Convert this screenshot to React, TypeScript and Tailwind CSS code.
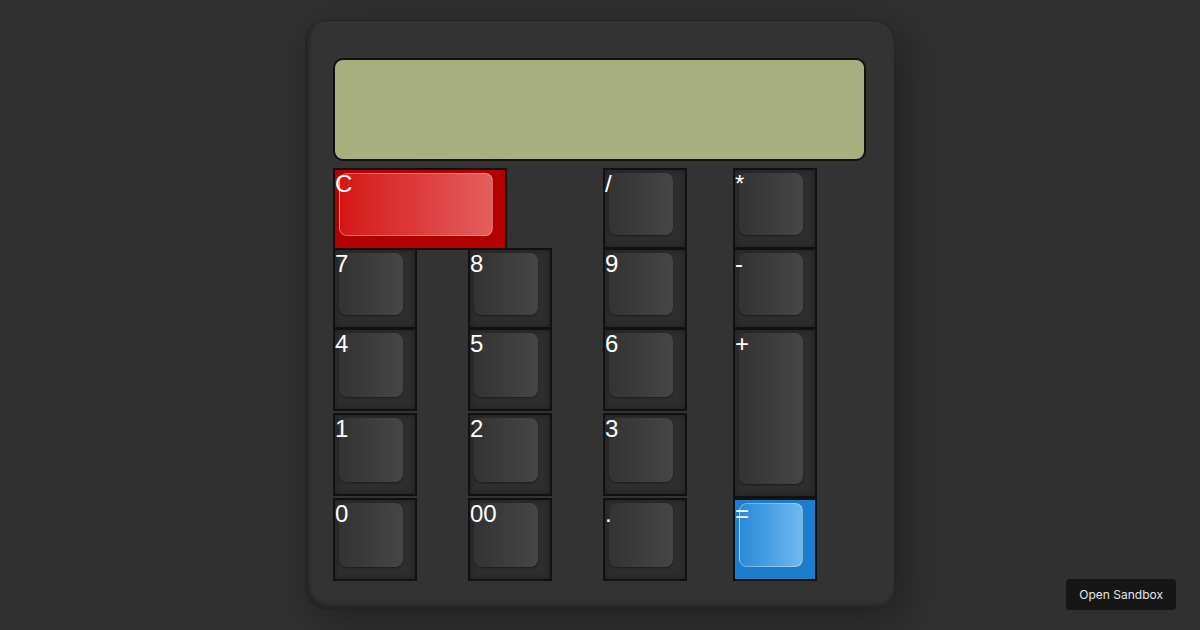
import React from "react";

type Tone = "dark" | "red" | "blue";

interface KeyDef {
  label: string;
  tone?: Tone;
  place: string;
  size: string;
}

const keys: KeyDef[] = [
  { label: "C", tone: "red", place: "col-start-1 col-span-2 row-start-1", size: "w-[174px] h-[82px]" },
  { label: "/", place: "col-start-3 row-start-1", size: "w-[84px] h-[81px]" },
  { label: "*", place: "col-start-4 row-start-1", size: "w-[84px] h-[81px]" },
  { label: "7", place: "col-start-1 row-start-2", size: "w-[84px] h-[81px]" },
  { label: "8", place: "col-start-2 row-start-2", size: "w-[84px] h-[81px]" },
  { label: "9", place: "col-start-3 row-start-2", size: "w-[84px] h-[81px]" },
  { label: "-", place: "col-start-4 row-start-2", size: "w-[84px] h-[81px]" },
  { label: "4", place: "col-start-1 row-start-3", size: "w-[84px] h-[83px]" },
  { label: "5", place: "col-start-2 row-start-3", size: "w-[84px] h-[83px]" },
  { label: "6", place: "col-start-3 row-start-3", size: "w-[84px] h-[83px]" },
  { label: "+", place: "col-start-4 row-start-3 row-span-2", size: "w-[84px] h-[170px]" },
  { label: "1", place: "col-start-1 row-start-4", size: "w-[84px] h-[83px]" },
  { label: "2", place: "col-start-2 row-start-4", size: "w-[84px] h-[83px]" },
  { label: "3", place: "col-start-3 row-start-4", size: "w-[84px] h-[83px]" },
  { label: "0", place: "col-start-1 row-start-5", size: "w-[84px] h-[83px]" },
  { label: "00", place: "col-start-2 row-start-5", size: "w-[84px] h-[83px]" },
  { label: ".", place: "col-start-3 row-start-5", size: "w-[84px] h-[83px]" },
  { label: "=", tone: "blue", place: "col-start-4 row-start-5", size: "w-[84px] h-[83px]" },
];

const outerTone: Record<Tone, string> = {
  dark: "bg-[#2e2e2e] shadow-[inset_0_0_6px_rgba(0,0,0,0.35)]",
  red: "bg-[#b30000]",
  blue: "bg-[#1b7dcc]",
};

const capTone: Record<Tone, string> = {
  dark: "bg-gradient-to-r from-[#333333] to-[#464646] shadow-[0_1px_2px_rgba(0,0,0,0.4)]",
  red: "bg-gradient-to-r from-[#d41414] via-[#dc3a3a] to-[#e45e5e] border border-[rgba(255,255,255,0.35)]",
  blue: "bg-gradient-to-r from-[#2a8ad8] via-[#4aa0e4] to-[#72b8ef] border border-[rgba(255,255,255,0.35)]",
};

function Key({ k }: { k: KeyDef }) {
  const tone = k.tone ?? "dark";
  return (
    <div
      className={`relative flex flex-col border-2 border-[#111111] ${outerTone[tone]} ${k.place} ${k.size}`}
    >
      <div className={`flex-1 mt-[3px] ml-[4px] mr-[12px] mb-[12px] rounded-[8px] ${capTone[tone]}`} />
      <span className="absolute left-0 top-0 text-[24px] leading-[28px] text-white">{k.label}</span>
    </div>
  );
}

export default function App() {
  return (
    <div className="relative flex h-[630px] w-[1200px] items-center justify-center bg-[#303030] font-['Liberation_Sans',Arial,sans-serif]">
      <div className="flex h-[590px] w-[590px] flex-col rounded-[22px] border border-[#242424] bg-[#333333] px-[27px] pt-[37px] shadow-[inset_3px_-4px_4px_rgba(0,0,0,0.3),10px_10px_40px_rgba(0,0,0,0.3)]">
        <div className="h-[103px] w-[533px] rounded-[10px] border-2 border-[#111111] bg-[#a7af7e]" />
        <div className="mt-[7px] grid grid-cols-[135px_135px_130px_84px] grid-rows-[80px_80px_85px_85px_83px] items-start">
          {keys.map((k) => (
            <Key key={k.label} k={k} />
          ))}
        </div>
      </div>
      <button className="absolute bottom-[20px] right-[24px] h-[31px] rounded-[4px] bg-[#161616] px-[13px] text-[12px] text-[#e6e6e6] font-['Inter',sans-serif]">
        Open Sandbox
      </button>
    </div>
  );
}
